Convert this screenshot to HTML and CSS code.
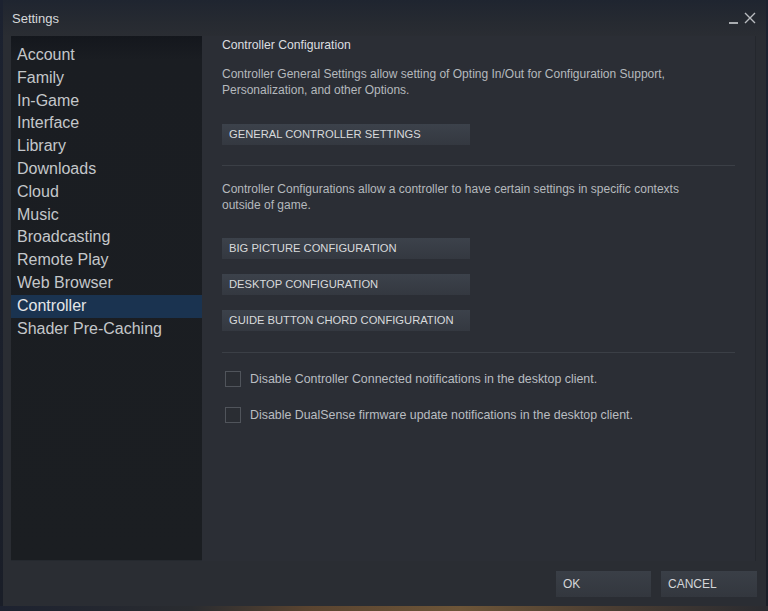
FILE: index.html
```html
<!DOCTYPE html>
<html>
<head>
<meta charset="utf-8">
<link rel="stylesheet" href="styles.css">
</head>
<body>
<div class="window">
  <div class="titlebar">
    <span class="title">Settings</span>
    <div class="winctl">
      <span class="min"></span>
      <svg class="close" width="12" height="12" viewBox="0 0 12 12"><path d="M1 1L11 11M11 1L1 11" stroke="#b9bcc0" stroke-width="1.4" fill="none"/></svg>
    </div>
  </div>
  <div class="main">
    <ul class="sidebar">
      <li>Account</li>
      <li>Family</li>
      <li>In-Game</li>
      <li>Interface</li>
      <li>Library</li>
      <li>Downloads</li>
      <li>Cloud</li>
      <li>Music</li>
      <li>Broadcasting</li>
      <li>Remote Play</li>
      <li>Web Browser</li>
      <li class="active">Controller</li>
      <li>Shader Pre-Caching</li>
    </ul>
    <div class="content">
      <div class="heading">Controller Configuration</div>
      <p class="desc first">Controller General Settings allow setting of Opting In/Out for Configuration Support, Personalization, and other Options.</p>
      <div class="btn first-btn">GENERAL CONTROLLER SETTINGS</div>
      <div class="sep sep1"></div>
      <p class="desc second">Controller Configurations allow a controller to have certain settings in specific contexts outside of game.</p>
      <div class="btn-group">
        <div class="btn">BIG PICTURE CONFIGURATION</div>
        <div class="btn">DESKTOP CONFIGURATION</div>
        <div class="btn">GUIDE BUTTON CHORD CONFIGURATION</div>
      </div>
      <div class="sep sep2"></div>
      <div class="checks">
        <label class="check"><span class="box"></span>Disable Controller Connected notifications in the desktop client.</label>
        <label class="check"><span class="box"></span>Disable DualSense firmware update notifications in the desktop client.</label>
      </div>
    </div>
  </div>
  <div class="footer">
    <div class="fbtn ok">OK</div>
    <div class="fbtn cancel">CANCEL</div>
  </div>
</div>
<div class="desktop"></div>
</body>
</html>
```
FILE: styles.css
```css
html, body {
  margin: 0;
  padding: 0;
}
body {
  width: 768px;
  height: 611px;
  overflow: hidden;
  background: linear-gradient(180deg, #1c2230 0%, #1a1e28 100%);
  font-family: "Liberation Sans", Arial, sans-serif;
}
.window {
  margin-left: 3px;
  width: 763px;
  height: 606px;
  background: #2a2d33;
  display: flex;
  flex-direction: column;
  box-sizing: border-box;
}
.titlebar {
  height: 36px;
  flex: none;
  display: flex;
  align-items: flex-start;
  justify-content: space-between;
  background: linear-gradient(180deg, #1f2530 0%, #262a31 60%, #2a2d33 100%);
}
.title {
  color: #d6d8da;
  font-size: 13px;
  line-height: 16px;
  padding-left: 9px;
  padding-top: 11px;
}
.winctl {
  display: flex;
  align-items: flex-end;
  gap: 6px;
  padding-top: 12px;
  padding-right: 10px;
}
.min {
  width: 9px;
  height: 2px;
  background: #a9acb0;
}
.close {
  display: block;
}
.main {
  display: flex;
  height: 525px;
  flex: none;
  margin-left: 8px;
  margin-right: 11px;
}
.sidebar {
  list-style: none;
  margin: 0;
  padding: 8px 0 0 0;
  width: 191px;
  flex: none;
  background: linear-gradient(180deg, #14171d 0px, #1a1d22 24px, #1b1e22 100%);
  border-bottom: 1px solid #25292f;
  box-sizing: border-box;
}
.sidebar li {
  height: 22.8px;
  line-height: 22.8px;
  font-size: 16px;
  color: #c4c7ca;
  padding-left: 6px;
}
.sidebar li.active {
  background: #1a3350;
  color: #e4e6e8;
}
.content {
  flex: 1;
  background: #2b2e35;
  padding: 1px 20px 0 20px;
  border-right: 1px solid #24272d;
  box-sizing: border-box;
}
.heading {
  font-size: 12.2px;
  line-height: 16px;
  color: #dcdee0;
}
.desc {
  margin: 0;
  font-size: 12px;
  line-height: 16px;
  color: #b5b9bd;
  max-width: 470px;
}
.desc.first {
  margin-top: 13px;
}
.desc.second {
  margin-top: 15px;
}
.btn {
  width: 248px;
  height: 21px;
  line-height: 21px;
  box-sizing: border-box;
  padding-left: 7px;
  font-size: 11.2px;
  color: #d8dadc;
  background: linear-gradient(180deg, #3c424b 0%, #343840 100%);
}
.first-btn {
  margin-top: 26px;
}
.sep {
  height: 1px;
  background: #3b3f46;
  width: 513px;
}
.sep1 {
  margin-top: 20px;
}
.btn-group {
  margin-top: 25px;
  display: flex;
  flex-direction: column;
  gap: 15px;
}
.sep2 {
  margin-top: 21px;
}
.checks {
  margin-top: 18px;
  display: flex;
  flex-direction: column;
  gap: 20px;
}
.check {
  display: flex;
  align-items: center;
  height: 16px;
  font-size: 12.4px;
  color: #b9bdc1;
}
.box {
  width: 16px;
  height: 16px;
  box-sizing: border-box;
  border: 1px solid #50545b;
  background: #2a2d33;
  margin-left: 3px;
  margin-right: 9px;
  flex: none;
}
.footer {
  flex: 1;
  display: flex;
  justify-content: flex-end;
  align-items: flex-start;
  padding-top: 10px;
  padding-right: 9px;
  gap: 10px;
}
.fbtn {
  height: 26px;
  line-height: 26px;
  font-size: 12px;
  color: #d3d5d8;
  padding-left: 7px;
  box-sizing: border-box;
  background: linear-gradient(180deg, #3a3f47 0%, #33373e 100%);
}
.ok {
  width: 95px;
}
.cancel {
  width: 96px;
}
.desktop {
  height: 5px;
  background: linear-gradient(90deg, #1d2230 0%, #2a2c30 25%, #5a4430 40%, #6d5538 60%, #4a3d32 80%, #2a2b30 100%);
}
```
